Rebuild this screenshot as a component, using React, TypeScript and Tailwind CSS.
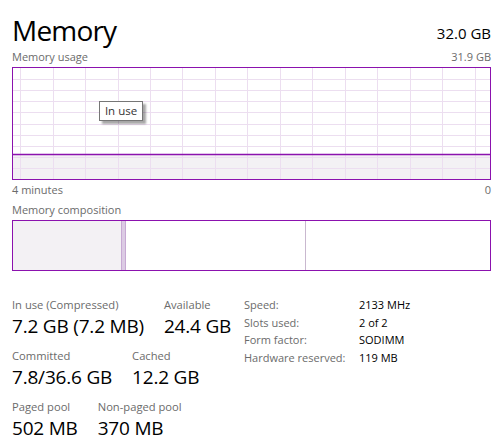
import React from "react";

const P = "#8b12ae";
const GRID = "#ecdef0";

function UsageGraph() {
  const hs = [11.1, 22.2, 33.3, 44.4, 55.5, 66.6, 77.7, 88.8, 99.9];
  const vs = [7, 40, 72, 105, 137, 169, 202, 234, 267, 299, 332, 364, 397, 429, 462];
  return (
    <svg width="477" height="111" className="block">
      <rect x="0" y="86" width="477" height="25" fill="#f3f1f4" />
      {hs.map((y) => (
        <line key={"h" + y} x1="0" x2="477" y1={Math.round(y) + 0.5} y2={Math.round(y) + 0.5} stroke={GRID} strokeWidth="1" />
      ))}
      {vs.map((x) => (
        <line key={"v" + x} y1="0" y2="111" x1={x + 0.5} x2={x + 0.5} stroke={GRID} strokeWidth="1" />
      ))}
      <line x1="0" x2="477" y1="86.5" y2="86.5" stroke={P} strokeWidth="1.4" />
    </svg>
  );
}

function Stat({ label, value }: { label: string; value: string }) {
  return (
    <div className="flex flex-col">
      <div className="text-[11.2px] leading-[16px] text-[#6b6b6b]">{label}</div>
      <div className="text-[19px] leading-[26px] text-black tracking-[-0.2px]">{value}</div>
    </div>
  );
}

export default function App() {
  return (
    <div
      className="relative w-[503px] h-[448px] bg-white overflow-hidden"
      style={{ fontFamily: '"Open Sans", "Noto Sans", sans-serif' }}
    >
      <div className="px-[12px]">
        <div className="flex items-end justify-between h-[47px] pt-[8px]">
          <div className="text-[28px] leading-[34px] text-black tracking-[-0.8px]">Memory</div>
          <div className="text-[15px] leading-[20px] text-black pb-[4px]">32.0 GB</div>
        </div>
        <div className="flex justify-between text-[11px] leading-[20px] text-[#6b6b6b]">
          <span>Memory usage</span>
          <span>31.9 GB</span>
        </div>
        <div className="relative w-[479px] h-[113px] border border-[#8b12ae]">
          <UsageGraph />
          <div className="absolute left-[86px] top-[33px] w-[44px] h-[20px] bg-white border border-[#767676] shadow-[3px_3px_2px_rgba(0,0,0,0.35)] flex items-center justify-center text-[11.5px] text-[#333]">
            In use
          </div>
        </div>
        <div className="flex justify-between text-[11px] leading-[18px] text-[#6b6b6b] mt-[1px]">
          <span>4 minutes</span>
          <span>0</span>
        </div>
        <div className="text-[11px] leading-[20px] text-[#6b6b6b] mt-[1px]">Memory composition</div>
        <div className="flex w-[479px] h-[51px] border border-[#8b12ae]">
          <div className="w-[108px] bg-[#f3f1f4]" />
          <div className="w-[5px] bg-[#dccbe4] border-l border-r border-[#c7a9d3]" />
          <div className="w-[180px] border-r border-[#c9b8cf]" />
          <div className="flex-1" />
        </div>
        <div className="flex mt-[26px]">
          <div className="w-[232px] flex flex-col gap-[9px]">
            <div className="flex gap-[20px]">
              <Stat label="In use (Compressed)" value="7.2 GB (7.2 MB)" />
              <Stat label="Available" value="24.4 GB" />
            </div>
            <div className="flex gap-[20px]">
              <Stat label="Committed" value="7.8/36.6 GB" />
              <Stat label="Cached" value="12.2 GB" />
            </div>
            <div className="flex gap-[20px]">
              <Stat label="Paged pool" value="502 MB" />
              <Stat label="Non-paged pool" value="370 MB" />
            </div>
          </div>
          <div className="flex flex-col text-[11px] leading-[17.5px] -mt-[1px]">
            {[
              ["Speed:", "2133 MHz"],
              ["Slots used:", "2 of 2"],
              ["Form factor:", "SODIMM"],
              ["Hardware reserved:", "119 MB"],
            ].map(([k, v]) => (
              <div key={k} className="flex">
                <span className="w-[115px] text-[#6b6b6b]">{k}</span>
                <span className="text-black">{v}</span>
              </div>
            ))}
          </div>
        </div>
      </div>
    </div>
  );
}
